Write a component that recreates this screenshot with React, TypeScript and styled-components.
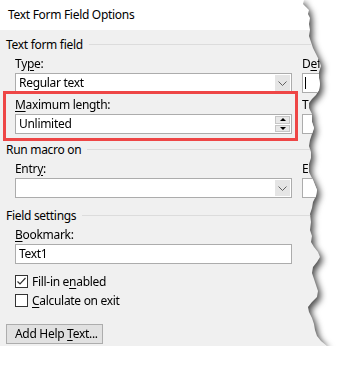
import React from 'react';
import styled, { createGlobalStyle } from 'styled-components';

const GlobalStyle = createGlobalStyle`
  html, body {
    margin: 0;
    padding: 0;
    background: #ffffff;
  }
  body {
    font-family: 'Noto Sans', 'Liberation Sans', sans-serif;
    font-size: 12px;
    letter-spacing: -0.3px;
    color: #000000;
  }
`;

// torn right edge of the dialog, traced from the screenshot
const tornEdge = [
  [0, 0], [304, 0], [303, 4], [306, 7], [309, 10], [308, 14], [310, 18],
  [309, 24], [310, 30], [309, 36], [311, 42], [313, 48], [316, 54],
  [319, 60], [321, 66], [319, 72], [319, 78], [320, 84], [319, 90],
  [316, 95], [312, 99], [309, 103], [309, 108], [312, 114], [312, 122],
  [314, 128], [312, 134], [310, 140], [309, 146], [311, 152], [311, 158],
  [309, 164], [309, 172], [313, 180], [317, 190], [316, 196], [313, 202],
  [312, 208], [310, 214], [311, 222], [310, 230], [312, 236], [311, 242],
  [314, 247], [318, 252], [320, 257], [317, 262], [313, 267], [312, 273],
  [314, 279], [316, 285], [318, 291], [317, 297], [312, 302], [308, 307],
  [309, 312], [312, 318], [314, 324], [315, 330], [317, 336], [321, 341],
  [327, 346], [0, 346],
]
  .map(([x, y]) => `${x}px ${y}px`)
  .join(', ');

const Shadow = styled.div`
  width: 346px;
  filter: drop-shadow(3px 3px 3px rgba(0, 0, 0, 0.7));
`;

const Dialog = styled.div`
  width: 340px;
  height: 346px;
  display: flex;
  flex-direction: column;
  overflow: hidden;
  clip-path: polygon(${tornEdge});
`;

const TitleBar = styled.div`
  height: 30px;
  line-height: 30px;
  padding-left: 8px;
  background: #ffffff;
  white-space: nowrap;
`;

const Body = styled.div`
  flex: 1;
  display: flex;
  flex-direction: column;
  align-items: flex-start;
  background: #f0f0f0;
  padding: 6px 0 0 6px;
`;

const GroupHeader = styled.div<{ $top?: number }>`
  align-self: stretch;
  display: flex;
  align-items: center;
  gap: 6px;
  height: 16px;
  margin-top: ${(p) => p.$top ?? 0}px;
  white-space: nowrap;

  &::after {
    content: '';
    flex: 1;
    height: 1px;
    background: #dcdcdc;
  }
`;

const FieldGrid = styled.div`
  display: grid;
  grid-template-columns: 277px 30px;
  column-gap: 10px;
  row-gap: 4px;
  margin: 4px 0 0 9px;
`;

const Field = styled.div`
  display: flex;
  flex-direction: column;
  position: relative;
`;

const Highlighted = styled(Field)`
  &::after {
    content: '';
    position: absolute;
    top: -6px;
    left: -12px;
    right: -6px;
    bottom: -7px;
    border: 3px solid #ee4646;
    pointer-events: none;
  }
`;

const Label = styled.div`
  height: 16px;
  line-height: 16px;
  margin-bottom: 1px;
  white-space: nowrap;
`;

const U = styled.span`
  text-decoration: underline;
  text-underline-offset: 2px;
`;

const Box = styled.div`
  box-sizing: border-box;
  height: 20px;
  display: flex;
  align-items: stretch;
  background: #ffffff;
  border: 1px solid #acacac;
`;

const Value = styled.div`
  flex: 1;
  padding-left: 3px;
  line-height: 18px;
  white-space: nowrap;
`;

const Caret = styled.div`
  width: 1px;
  height: 12px;
  margin: 3px 0 0 2px;
  background: #000000;
`;

const DropButton = styled.div`
  width: 15px;
  margin: 1px;
  background: #e5e5e5;
  display: flex;
  align-items: center;
  justify-content: center;
`;

const Spinner = styled.div`
  width: 15px;
  margin: 1px;
  display: flex;
  flex-direction: column;
  gap: 1px;
`;

const SpinButton = styled.div<{ $down?: boolean }>`
  flex: 1;
  background: #e8e8e8;
  border: 1px solid #c6c6c6;
  display: flex;
  align-items: center;
  justify-content: center;

  &::before {
    content: '';
    border-left: 3px solid transparent;
    border-right: 3px solid transparent;
    ${(p) =>
      p.$down ? 'border-top: 3px solid #000;' : 'border-bottom: 3px solid #000;'}
  }
`;

const Bookmark = styled(Field)`
  width: 277px;
  margin: 4px 0 0 9px;
`;

const CheckList = styled.div`
  display: flex;
  flex-direction: column;
  gap: 3px;
  margin: 9px 0 0 9px;
`;

const CheckRow = styled.label`
  display: flex;
  align-items: center;
  gap: 4px;
  height: 16px;
  white-space: nowrap;
`;

const CheckBox = styled.span`
  box-sizing: border-box;
  width: 13px;
  height: 13px;
  border: 1px solid #333333;
  background: #ffffff;
  display: flex;
  align-items: center;
  justify-content: center;
`;

const Button = styled.div`
  box-sizing: border-box;
  width: 97px;
  height: 20px;
  margin-top: 16px;
  padding-left: 8px;
  line-height: 18px;
  background: #e1e1e1;
  border: 1px solid #adadad;
  white-space: nowrap;
`;

const Chevron = () => (
  <svg width="9" height="5" viewBox="0 0 9 5">
    <polyline points="0.5,0.5 4.5,4.5 8.5,0.5" fill="none" stroke="#606060" strokeWidth="1" />
  </svg>
);

const Check = () => (
  <svg width="11" height="11" viewBox="0 0 11 11">
    <polyline points="1.5,5.5 4,8 9.5,2" fill="none" stroke="#333333" strokeWidth="1.2" />
  </svg>
);

const Select = ({ value }: { value?: string }) => (
  <Box>
    <Value>{value}</Value>
    <DropButton>
      <Chevron />
    </DropButton>
  </Box>
);

export default function App() {
  return (
    <>
      <GlobalStyle />
      <Shadow>
        <Dialog>
          <TitleBar>Text Form Field Options</TitleBar>
          <Body>
            <GroupHeader>Text form field</GroupHeader>
            <FieldGrid>
              <Field>
                <Label>
                  Ty<U>p</U>e:
                </Label>
                <Select value="Regular text" />
              </Field>
              <Field>
                <Label>
                  D<U>e</U>f
                </Label>
                <Box>
                  <Caret />
                </Box>
              </Field>
              <Highlighted>
                <Label>
                  <U>M</U>aximum length:
                </Label>
                <Box>
                  <Value>Unlimited</Value>
                  <Spinner>
                    <SpinButton />
                    <SpinButton $down />
                  </Spinner>
                </Box>
              </Highlighted>
              <Field>
                <Label>T</Label>
                <Box />
              </Field>
            </FieldGrid>

            <GroupHeader $top={7}>Run macro on</GroupHeader>
            <FieldGrid>
              <Field>
                <Label>
                  Entr<U>y</U>:
                </Label>
                <Select />
              </Field>
              <Field>
                <Label>E</Label>
                <Box />
              </Field>
            </FieldGrid>

            <GroupHeader $top={9}>Field settings</GroupHeader>
            <Bookmark>
              <Label>
                <U>B</U>ookmark:
              </Label>
              <Box>
                <Value>Text1</Value>
              </Box>
            </Bookmark>

            <CheckList>
              <CheckRow>
                <CheckBox>
                  <Check />
                </CheckBox>
                <span>
                  Fill-in e<U>n</U>abled
                </span>
              </CheckRow>
              <CheckRow>
                <CheckBox />
                <span>
                  <U>C</U>alculate on exit
                </span>
              </CheckRow>
            </CheckList>

            <Button>
              Add Help <U>T</U>ext...
            </Button>
          </Body>
        </Dialog>
      </Shadow>
    </>
  );
}
